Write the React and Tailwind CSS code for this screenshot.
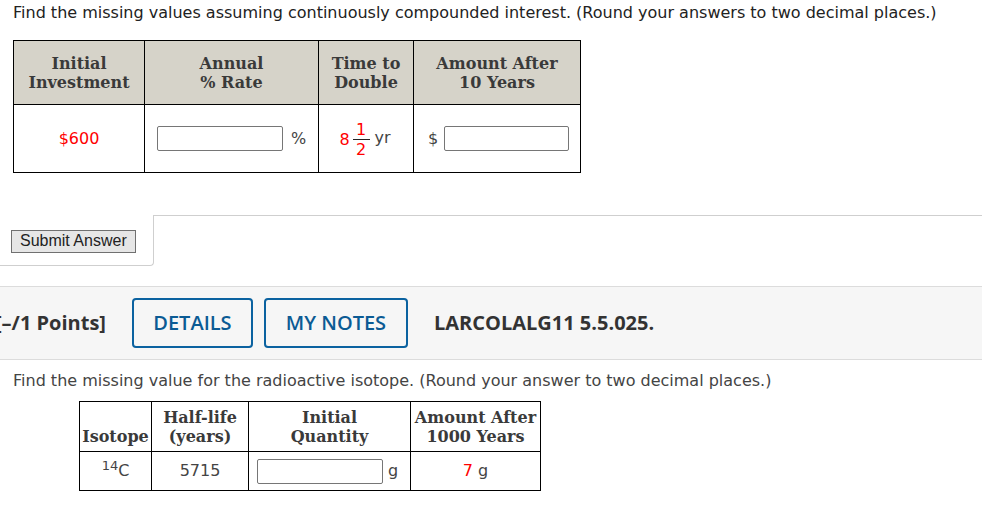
export default function App() {
  const body = { fontFamily: 'Verdana, "DejaVu Sans", sans-serif' };
  const head = { fontFamily: '"DejaVu Serif", Georgia, serif' };
  const open = { fontFamily: '"Open Sans", sans-serif' };

  return (
    <div className="w-[982px] h-[521px] bg-white overflow-hidden text-[#333]" style={body}>
      <p className="pl-[13px] pt-[2px] text-[16px] leading-[21px] text-[#222]">
        Find the missing values assuming continuously compounded interest. (Round your answers to two decimal places.)
      </p>

      {/* first table */}
      <table className="ml-[13px] mt-[17px] border-collapse border border-black text-[16px]">
        <thead>
          <tr className="bg-[#d6d3c9] h-[64px]" style={head}>
            <th className="w-[131px] border border-black font-bold leading-[19px] text-[#3a3a3a]">Initial<br />Investment</th>
            <th className="w-[174px] border border-black font-bold leading-[19px] text-[#3a3a3a]">Annual<br />% Rate</th>
            <th className="w-[95px] border border-black font-bold leading-[19px] text-[#3a3a3a]">Time to<br />Double</th>
            <th className="w-[167px] border border-black font-bold leading-[19px] text-[#3a3a3a]">Amount After<br />10 Years</th>
          </tr>
        </thead>
        <tbody>
          <tr className="h-[68px]">
            <td className="border border-black text-center text-[#ff0000]">$600</td>
            <td className="border border-black">
              <div className="flex items-center pl-[12px] gap-[8px]">
                <input className="w-[126px] h-[25px] border border-[#767676] rounded-[2px]" />
                <span className="text-[#444]">%</span>
              </div>
            </td>
            <td className="border border-black">
              <div className="flex items-center justify-center gap-[5px] pr-[2px] pt-[2px]">
                <span className="text-[#ff0000]">8</span>
                <span className="flex flex-col items-center text-[#ff0000] leading-[17px] -ml-[2px]">
                  <span>1</span>
                  <span className="w-[17px] border-t border-[#222] mt-[1px]" />
                  <span className="mt-[1px]">2</span>
                </span>
                <span className="text-[#444] -mt-[3px]">yr</span>
              </div>
            </td>
            <td className="border border-black">
              <div className="flex items-center pl-[14px] gap-[6px]">
                <span className="text-[#444]">$</span>
                <input className="w-[125px] h-[25px] border border-[#767676] rounded-[2px]" />
              </div>
            </td>
          </tr>
        </tbody>
      </table>

      {/* submit area */}
      <div className="flex mt-[42px]">
        <div className="w-[154px] h-[51px] border-r border-b border-[#cfcfcf] rounded-br-[4px] flex items-center pl-[11px] pt-[2px]">
          <button
            className="h-[23px] px-[8px] border border-[#707070] bg-[#e6e6e6] text-[16px] leading-[20px] text-[#222]"
            style={{ fontFamily: '"Liberation Sans", Arial, sans-serif' }}
          >
            Submit Answer
          </button>
        </div>
        <div className="flex-1 border-t border-[#cfcfcf]" />
      </div>

      {/* question header bar */}
      <div className="mt-[20px] h-[74px] bg-[#f6f6f6] border-t border-b border-[#dcdcdc] flex items-center" style={open}>
        <span className="ml-[-5px] text-[20px] font-bold text-[#333]">[–/1 Points]</span>
        <button className="ml-[26px] w-[121px] h-[50px] border-2 border-[#0b62a0] rounded-[4px] text-[20px] font-semibold text-[#0b5b94]">
          DETAILS
        </button>
        <button className="ml-[11px] w-[144px] h-[50px] border-2 border-[#0b62a0] rounded-[4px] text-[20px] font-semibold text-[#0b5b94]">
          MY NOTES
        </button>
        <span className="ml-[26px] text-[20px] font-bold text-[#333]">LARCOLALG11 5.5.025.</span>
      </div>

      <p className="pl-[13px] pt-[11px] text-[16px] leading-[20px] text-[#444]">
        Find the missing value for the radioactive isotope. (Round your answer to two decimal places.)
      </p>

      {/* second table */}
      <table className="ml-[79px] mt-[10px] border-collapse border border-black text-[16px]">
        <thead>
          <tr className="h-[50px]" style={head}>
            <th className="w-[72px] border border-black font-bold leading-[19px] align-bottom pb-[5px] text-[#3a3a3a]">Isotope</th>
            <th className="w-[97px] border border-black font-bold leading-[19px] align-bottom pb-[5px] text-[#3a3a3a]">Half-life<br />(years)</th>
            <th className="w-[162px] border border-black font-bold leading-[19px] align-bottom pb-[5px] text-[#3a3a3a]">Initial<br />Quantity</th>
            <th className="w-[130px] border border-black font-bold leading-[19px] align-bottom pb-[5px] text-[#3a3a3a]">Amount After<br />1000 Years</th>
          </tr>
        </thead>
        <tbody>
          <tr className="h-[39px]">
            <td className="border border-black text-center text-[#444]">
              <sup className="text-[13px]">14</sup>C
            </td>
            <td className="border border-black text-center text-[#444]">5715</td>
            <td className="border border-black">
              <div className="flex items-center pl-[8px] gap-[5px]">
                <input className="w-[126px] h-[25px] border border-[#767676] rounded-[2px]" />
                <span className="text-[#444]">g</span>
              </div>
            </td>
            <td className="border border-black text-center">
              <span className="text-[#ff0000]">7</span> <span className="text-[#444]">g</span>
            </td>
          </tr>
        </tbody>
      </table>
    </div>
  );
}
